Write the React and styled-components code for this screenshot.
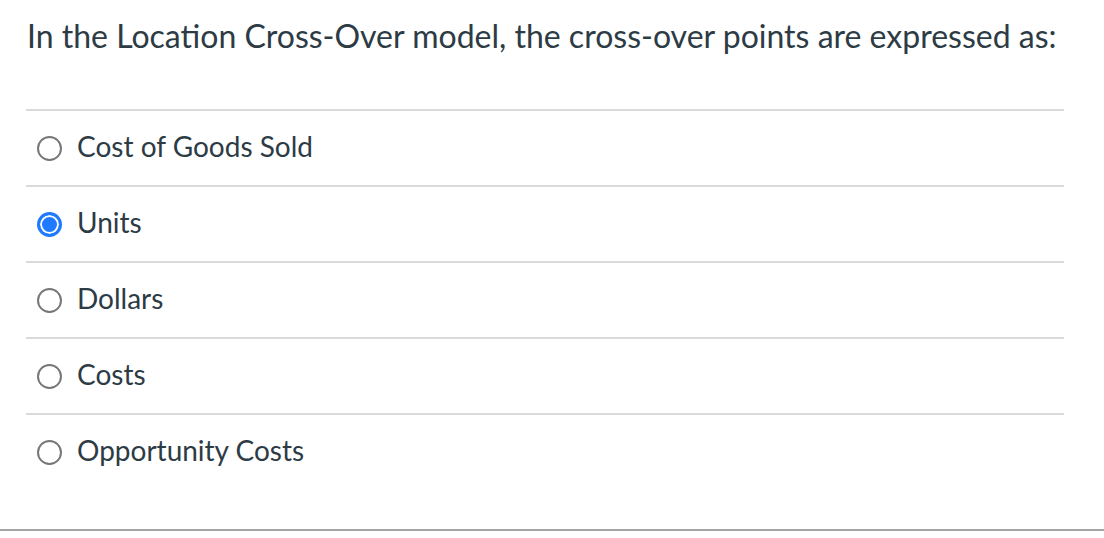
import styled, { createGlobalStyle } from "styled-components";

const GlobalStyle = createGlobalStyle`
  body {
    margin: 0;
    background: #ffffff;
    font-family: "Lato", "Open Sans", sans-serif;
    color: #2d3b45;
  }
`;

const answers = [
  { id: "a1", label: "Cost of Goods Sold" },
  { id: "a2", label: "Units", checked: true },
  { id: "a3", label: "Dollars" },
  { id: "a4", label: "Costs" },
  { id: "a5", label: "Opportunity Costs" },
];

function App() {
  return (
    <Page>
      <GlobalStyle />
      <Content>
        <Question>
          In the Location Cross-Over model, the cross-over points are expressed
          as:
        </Question>
        <AnswerList>
          {answers.map((a) => (
            <Answer key={a.id}>
              <Radio checked={a.checked} />
              <Label>{a.label}</Label>
            </Answer>
          ))}
        </AnswerList>
      </Content>
    </Page>
  );
}

export default App;

const Page = styled.div`
  height: 538px;
  overflow: hidden;
`;

const Content = styled.div`
  padding: 0 40px 40px 26px;
  border-bottom: 2px solid #a5a5a5;
`;

const Question = styled.div`
  font-size: 32px;
  line-height: 38px;
  padding-top: 17px;
  margin-bottom: 54px;
  padding-left: 1px;
`;

const AnswerList = styled.div`
  display: flex;
  flex-direction: column;
`;

const Answer = styled.label`
  display: flex;
  align-items: center;
  height: 74px;
  border-top: 2px solid #dadada;
  padding-left: 11px;
`;

const Radio = styled.span`
  box-sizing: border-box;
  width: 25px;
  height: 25px;
  border-radius: 50%;
  flex-shrink: 0;
  margin-right: 15px;
  border: ${(p) => (p.checked ? "3px solid #1f7aff" : "2px solid #777777")};
  background: ${(p) => (p.checked ? "#1f7aff" : "#ffffff")};
  box-shadow: ${(p) => (p.checked ? "inset 0 0 0 2px #ffffff" : "none")};
`;

const Label = styled.span`
  font-size: 28px;
  line-height: 32px;
  margin-bottom: 4px;
`;
